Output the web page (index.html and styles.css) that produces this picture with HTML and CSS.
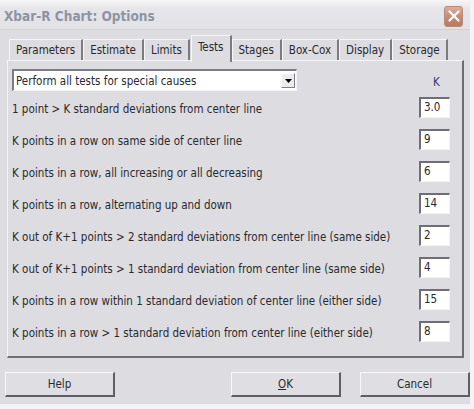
FILE: index.html
```html
<!DOCTYPE html>
<html lang="en">
<head>
  <meta charset="UTF-8">
  <title>Xbar-R Chart: Options</title>
  <link rel="stylesheet" href="styles.css">
</head>
<body>
  <div class="window">
    <div class="titlebar">
      <span class="title">Xbar-R Chart: Options</span>
      <span class="close-btn">
        <svg width="12" height="12" viewBox="0 0 12 12">
          <path d="M1.5 1.5 L10.5 10.5 M10.5 1.5 L1.5 10.5" stroke="#fff" stroke-width="2.2" stroke-linecap="round"/>
        </svg>
      </span>
    </div>

    <div class="tabs">
      <span class="tab">Parameters</span>
      <span class="tab">Estimate</span>
      <span class="tab">Limits</span>
      <span class="tab active">Tests</span>
      <span class="tab">Stages</span>
      <span class="tab">Box-Cox</span>
      <span class="tab">Display</span>
      <span class="tab">Storage</span>
    </div>

    <div class="panel">
      <div class="test-grid">
        <div class="select">
          <span class="select-text">Perform all tests for special causes</span>
          <span class="select-arrow">
            <svg width="7" height="4" viewBox="0 0 7 4"><path d="M0 0 H7 L3.5 4 Z" fill="#000"/></svg>
          </span>
        </div>
        <div class="k-head">K</div>

        <div class="label">1 point &gt; K standard deviations from center line</div>
        <div class="num">3.0</div>

        <div class="label">K points in a row on same side of center line</div>
        <div class="num">9</div>

        <div class="label">K points in a row, all increasing or all decreasing</div>
        <div class="num">6</div>

        <div class="label">K points in a row, alternating up and down</div>
        <div class="num">14</div>

        <div class="label">K out of K+1 points &gt; 2 standard deviations from center line (same side)</div>
        <div class="num">2</div>

        <div class="label">K out of K+1 points &gt; 1 standard deviation from center line (same side)</div>
        <div class="num">4</div>

        <div class="label">K points in a row within 1 standard deviation of center line (either side)</div>
        <div class="num">15</div>

        <div class="label">K points in a row &gt; 1 standard deviation from center line (either side)</div>
        <div class="num">8</div>
      </div>
    </div>

    <div class="buttons">
      <span class="btn">Help</span>
      <span class="btn btn-ok"><u>O</u>K</span>
      <span class="btn">Cancel</span>
    </div>
  </div>
</body>
</html>
```

FILE: styles.css
```css
* {
  margin: 0;
  padding: 0;
  box-sizing: border-box;
}

body {
  width: 474px;
  height: 409px;
  overflow: hidden;
  background: #f4f4f6;
  font-family: "DejaVu Sans Condensed", "Liberation Sans", sans-serif;
  font-size: 11.5px;
  color: #2a2a2e;
}

.window {
  width: 470px;
  height: 405px;
  background: #dcdce1;
  border-bottom: 1px solid #f0f0f2;
}

.titlebar {
  height: 30px;
  display: flex;
  align-items: center;
  justify-content: space-between;
  padding: 0 7px 0 4px;
  background: linear-gradient(#f6f6f8, #e6e6ea 30%, #e2e2e6);
  border-bottom: 1px solid #d0d0d6;
}

.title {
  font-family: "DejaVu Sans Condensed", "DejaVu Sans", sans-serif;
  font-weight: bold;
  font-size: 13.5px;
  color: #8e93a3;
  padding-top: 3px;
}

.close-btn {
  width: 19px;
  height: 21px;
  margin-top: 3px;
  border-radius: 3px;
  border: 1px solid #b88a78;
  background: linear-gradient(#dcae9b, #c58c76 50%, #b77a63);
  display: flex;
  align-items: center;
  justify-content: center;
}

.tabs {
  display: flex;
  align-items: flex-end;
  height: 30px;
  padding-left: 9px;
  position: relative;
  z-index: 1;
}

.tab {
  height: 21px;
  padding: 3px 6px 0;
  border-left: 1px solid #f6f6f8;
  border-top: 1px solid #f6f6f8;
  border-right: 2px solid #7a7a80;
  background: #dcdce1;
  white-space: nowrap;
}

.tab.active {
  height: 27px;
  padding-top: 4px;
  margin-bottom: -2px;
  margin-left: 1px;
}

.panel {
  margin-left: 7px;
  width: 457px;
  height: 298px;
  border-left: 1px solid #f6f6f8;
  border-top: 1px solid #f6f6f8;
  border-right: 2px solid #6e6e74;
  border-bottom: 2px solid #6e6e74;
  padding: 8px 12px 0 4px;
}

.test-grid {
  display: grid;
  grid-template-columns: 1fr 31px;
  grid-template-rows: 22px;
  grid-auto-rows: 32px;
  align-items: center;
}

.select {
  width: 285px;
  height: 22px;
  background: #fff;
  border-top: 2px solid #7c7c82;
  border-left: 2px solid #7c7c82;
  border-right: 1px solid #f4f4f6;
  border-bottom: 1px solid #f4f4f6;
  display: flex;
  align-items: center;
  justify-content: space-between;
  padding: 0 1px 0 2px;
}

.select-arrow {
  width: 14px;
  height: 15px;
  background: #ececee;
  border-top: 1px solid #fff;
  border-left: 1px solid #fff;
  border-right: 1px solid #808086;
  border-bottom: 1px solid #808086;
  display: flex;
  align-items: center;
  justify-content: center;
}

.k-head {
  text-align: center;
  padding-top: 4px;
  margin-left: 4px;
  color: #3a3a6a;
}

.label {
  padding-top: 3px;
  white-space: nowrap;
}

.num {
  height: 21px;
  background: #fff;
  border-top: 2px solid #6e6e74;
  border-left: 2px solid #6e6e74;
  border-right: 1px solid #f4f4f6;
  border-bottom: 1px solid #f4f4f6;
  padding: 1px 0 0 3px;
}

.buttons {
  display: flex;
  gap: 19px;
  padding: 14px 0 0 5px;
}

.btn {
  width: 110px;
  height: 25px;
  display: flex;
  align-items: center;
  justify-content: center;
  background: #dedee3;
  border-top: 1px solid #f8f8fa;
  border-left: 1px solid #f8f8fa;
  border-right: 2px solid #5e5e64;
  border-bottom: 2px solid #5e5e64;
}

.btn-ok {
  margin-left: auto;
}
```
